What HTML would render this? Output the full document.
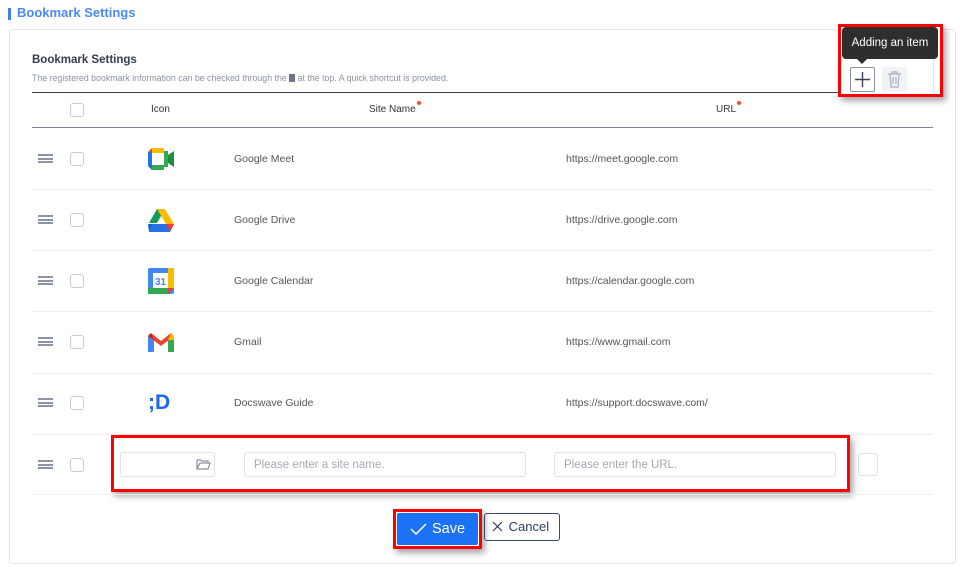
<!DOCTYPE html>
<html><head><meta charset="utf-8"><style>
*{box-sizing:border-box;margin:0;padding:0}
body{width:960px;height:567px;background:#fff;font-family:"Liberation Sans",sans-serif;position:relative;overflow:hidden;color:#555}
.a{position:absolute}
.cb{position:absolute;width:14px;height:14px;border:1px solid #c8ccd4;border-radius:3px;background:#fff}
.ham{position:absolute;width:15px;height:9px;border-top:2px solid #8a94a6;border-bottom:2px solid #8a94a6}
.ham:after{content:"";position:absolute;left:0;right:0;top:1.5px;border-top:2px solid #8a94a6}
.line{position:absolute;left:32px;width:901px;border-top:1px solid #eceef2}
.t{position:absolute;font-size:10.5px;color:#555}
.inp{position:absolute;border:1px solid #dfe2e8;border-radius:3px;background:#fff;font-size:11.5px;color:#a4aab5;padding-left:9px;line-height:24px}
.h{position:absolute;top:104px;font-size:10px;color:#333;line-height:12px}
.dot{position:absolute;top:-3px;right:-5px;width:4px;height:4px;border-radius:2px;background:#f04e23}
</style></head><body>
<div class="a" style="left:8px;top:8px;width:3px;height:12px;background:#3d7ef5"></div>
<div class="a" style="left:17px;top:5px;font-size:13px;font-weight:bold;color:#4a8af5">Bookmark Settings</div>
<div class="a" style="left:9px;top:29px;width:947px;height:535px;border:1px solid #e3e5ea;border-radius:4px"></div>
<div class="a" style="left:32px;top:54px;font-size:11.5px;font-weight:bold;color:#333c4e">Bookmark Settings</div>
<div class="a" style="left:32px;top:73px;font-size:8.8px;color:#8a92a2;white-space:nowrap">The registered bookmark information can be checked through the <span style="display:inline-block;width:6px;height:8px;background:#6c7586;vertical-align:-1px"></span> at the top. A quick shortcut is provided.</div>
<div class="a" style="left:32px;top:92px;width:901px;border-top:1px solid #3a4358"></div>
<div class="a" style="left:32px;top:127px;width:901px;border-top:1px solid #7c8496"></div>
<div class="cb" style="left:70px;top:103px"></div>
<div class="h" style="left:151px">Icon</div>
<div class="h" style="left:369px">Site Name<span class="dot"></span></div>
<div class="h" style="left:716px">URL<span class="dot"></span></div>

<div class="ham" style="left:38px;top:154px"></div><div class="cb" style="left:70px;top:152px"></div>
<div class="t" style="left:234px;top:153px">Google Meet</div><div class="t" style="left:566px;top:153px">https://meet.google.com</div>
<svg class="a" style="left:148px;top:148px" width="26" height="22" viewBox="0 0 26 22"><rect x="0" y="4" width="4" height="14" fill="#1e74e8"/><path d="M4 0h12v5H4z" fill="#fbbc04"/><path d="M0 4L4 0v4z" fill="#ea4335"/><path d="M4 17h12v5H4z" fill="#34a853"/><rect x="16" y="3" width="4" height="16" fill="#34a853"/><path d="M20 7l6-4v16l-6-4z" fill="#1e8e3e"/><path d="M0 18h4v4z" fill="#1967d2"/></svg>
<div class="line" style="top:189px"></div>

<div class="ham" style="left:38px;top:215px"></div><div class="cb" style="left:70px;top:213px"></div>
<div class="t" style="left:234px;top:214px">Google Drive</div><div class="t" style="left:566px;top:214px">https://drive.google.com</div>
<svg class="a" style="left:148px;top:209px" width="26" height="23" viewBox="0 0 26 23"><path d="M9 0h8l-8 14H1z" fill="#0f9d58"/><path d="M17 0l9 15h-8L9 0z" fill="#fbbc04"/><path d="M5 15h21l-4 8H1z" fill="#2a71e6"/><path d="M22 23l4-8h-8z" fill="#ea4335"/><path d="M0 15l5 0-4 8z" fill="#0b63d1"/></svg>
<div class="line" style="top:250px"></div>

<div class="ham" style="left:38px;top:276px"></div><div class="cb" style="left:70px;top:274px"></div>
<div class="t" style="left:234px;top:275px">Google Calendar</div><div class="t" style="left:566px;top:275px">https://calendar.google.com</div>
<svg class="a" style="left:148px;top:268px" width="26" height="26" viewBox="0 0 26 26"><rect width="26" height="26" rx="2" fill="#4285f4"/><rect x="20" y="0" width="6" height="20" fill="#fbbc04"/><rect x="0" y="20" width="20" height="6" fill="#34a853"/><path d="M20 20h6l-6 6z" fill="#ea4335"/><rect x="5" y="5" width="15" height="15" fill="#fff"/><text x="12.5" y="17" font-size="10" font-weight="bold" fill="#4285f4" text-anchor="middle" font-family="Liberation Sans">31</text></svg>
<div class="line" style="top:311px"></div>

<div class="ham" style="left:38px;top:337px"></div><div class="cb" style="left:70px;top:335px"></div>
<div class="t" style="left:234px;top:336px">Gmail</div><div class="t" style="left:566px;top:336px">https://www.gmail.com</div>
<svg class="a" style="left:148px;top:333px" width="26" height="19" viewBox="0 0 26 19"><path d="M0 3v16h6V7z" fill="#4285f4"/><path d="M20 7v12h6V3z" fill="#34a853"/><path d="M0 3l13 10 13-10-3-3-10 8L3 0z" fill="#ea4335"/><path d="M23 0l3 3v4l-6 0z" fill="#fbbc04"/><path d="M0 3l3-3 3 7z" fill="#c5221f"/></svg>
<div class="line" style="top:373px"></div>

<div class="ham" style="left:38px;top:398px"></div><div class="cb" style="left:70px;top:396px"></div>
<div class="t" style="left:234px;top:397px">Docswave Guide</div><div class="t" style="left:566px;top:397px">https://support.docswave.com/</div>
<div class="a" style="left:148px;top:391px;font-size:21px;font-weight:bold;color:#1a66ff;line-height:24px">;D</div>
<div class="line" style="top:434px"></div>

<div class="ham" style="left:38px;top:460px"></div><div class="cb" style="left:70px;top:458px"></div>
<div class="inp" style="left:858px;top:453px;width:20px;height:23px"></div>
<div class="a" style="left:111px;top:435px;width:739px;height:57px;border:3px solid #f00;background:#fff;box-shadow:3px 4px 6px rgba(0,0,0,.35)"></div>
<div class="inp" style="left:120px;top:452px;width:95px;height:25px"></div>
<svg class="a" style="left:196px;top:458px" width="15" height="12" viewBox="0 0 15 12"><path d="M1 2h4l1 1h6v2M1 2v9h11l2-6H4l-3 6" fill="none" stroke="#8a92a2" stroke-width="1.2"/></svg>
<div class="inp" style="left:244px;top:452px;width:282px;height:25px">Please enter a site name.</div>
<div class="inp" style="left:554px;top:452px;width:282px;height:25px">Please enter the URL.</div>
<div class="line" style="top:494px"></div>

<div class="a" style="left:393px;top:509px;width:89px;height:40px;border:3px solid #f00;box-shadow:3px 4px 6px rgba(0,0,0,.35)"></div>
<div class="a" style="left:397px;top:513px;width:81px;height:32px;background:#1b72f5;border-radius:2px;color:#fff;font-size:14.5px;line-height:32px;padding-left:13px">
<svg style="vertical-align:-2px;margin-right:5px" width="17" height="12" viewBox="0 0 17 12"><path d="M1 6l5 5L16 1" fill="none" stroke="#fff" stroke-width="1.5"/></svg>Save</div>
<div class="a" style="left:484px;top:513px;width:76px;height:28px;border:1px solid #3a4a6e;border-radius:3px;color:#2d3c62;font-size:13px;line-height:26px;padding-left:7px">
<svg style="vertical-align:-1px;margin-right:2px" width="11" height="11" viewBox="0 0 11 11"><path d="M1 1l9 9M10 1L1 10" stroke="#2d3c62" stroke-width="1.2"/></svg> Cancel</div>

<div class="a" style="left:838px;top:24px;width:105px;height:73px;border:3px solid #f00;background:#fff;box-shadow:3px 4px 6px rgba(0,0,0,.35)"></div>
<div class="a" style="left:933px;top:27px;border-left:1px solid #e3e5ea;height:67px"></div>
<div class="a" style="left:842px;top:27px;width:96px;height:32px;background:#2e2e2e;border-radius:4px;color:#fff;font-size:11.5px;line-height:32px;text-align:center">Adding an item</div>
<div class="a" style="left:857px;top:59px;width:0;height:0;border-left:5px solid transparent;border-right:5px solid transparent;border-top:5px solid #2e2e2e"></div>
<div class="a" style="left:850px;top:67px;width:25px;height:25px;border:1px solid #8a94a6;border-radius:2px"></div>
<svg class="a" style="left:854px;top:71px" width="17" height="17" viewBox="0 0 17 17"><path d="M8.5 1v15M1 8.5h15" stroke="#3a4358" stroke-width="1.4"/></svg>
<div class="a" style="left:882px;top:67px;width:25px;height:25px;background:#f2f3f6;border-radius:2px"></div>
<svg class="a" style="left:887px;top:71px" width="15" height="17" viewBox="0 0 15 17"><path d="M1 3h13M5 3V1h5v2M3 3l1 13h7l1-13M6 6v7M9 6v7" fill="none" stroke="#a8afbd" stroke-width="1.2"/></svg>
</body></html>
